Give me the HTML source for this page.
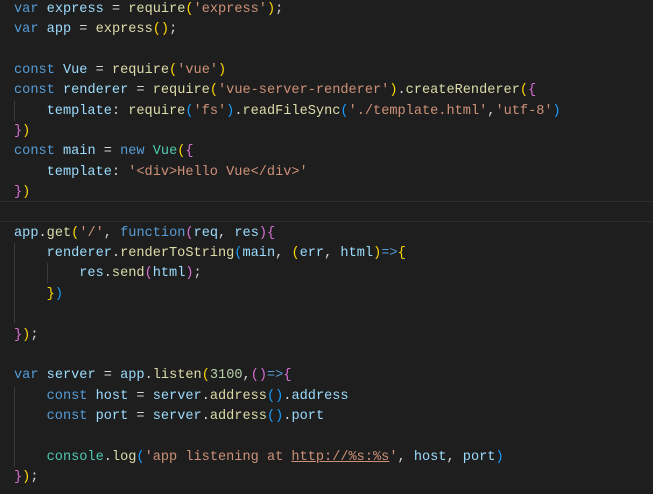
<!DOCTYPE html>
<html><head><meta charset="utf-8"><style>
html,body{margin:0;padding:0;background:#1e1e1e;width:653px;height:494px;overflow:hidden}
pre{position:absolute;left:14px;top:0px;margin:0;font-family:"Liberation Mono",monospace;font-size:13.6px;line-height:20.35px;color:#d4d4d4}
.k{color:#569cd6}.v{color:#9cdcfe}.f{color:#dcdcaa}.s{color:#ce9178}.c{color:#4ec9b0}.n{color:#b5cea8}
.y{color:#ffd700}.p{color:#da70d6}.b{color:#179fff}.u{text-decoration:underline}
.hl{position:absolute;left:0;top:201px;width:653px;height:19px;border-top:1px solid #2c2c2c;border-bottom:1px solid #2c2c2c}
.g{position:absolute;width:1px;background:#3a3a3a}
</style></head><body>
<div class="hl"></div>
<div class="g" style="left:14px;top:101px;height:20px"></div>
<div class="g" style="left:14px;top:243px;height:80px"></div>
<div class="g" style="left:47px;top:263px;height:20px"></div>
<div class="g" style="left:14px;top:387px;height:80px"></div>
<pre><span class="k">var</span> <span class="v">express</span> = <span class="f">require</span><span class="y">(</span><span class="s">'express'</span><span class="y">)</span>;
<span class="k">var</span> <span class="v">app</span> = <span class="f">express</span><span class="y">()</span>;

<span class="k">const</span> <span class="v">Vue</span> = <span class="f">require</span><span class="y">(</span><span class="s">'vue'</span><span class="y">)</span>
<span class="k">const</span> <span class="v">renderer</span> = <span class="f">require</span><span class="y">(</span><span class="s">'vue-server-renderer'</span><span class="y">)</span>.<span class="f">createRenderer</span><span class="y">(</span><span class="p">{</span>
    <span class="v">template</span>: <span class="f">require</span><span class="b">(</span><span class="s">'fs'</span><span class="b">)</span>.<span class="f">readFileSync</span><span class="b">(</span><span class="s">'./template.html'</span>,<span class="s">'utf-8'</span><span class="b">)</span>
<span class="p">}</span><span class="y">)</span>
<span class="k">const</span> <span class="v">main</span> = <span class="k">new</span> <span class="c">Vue</span><span class="y">(</span><span class="p">{</span>
    <span class="v">template</span>: <span class="s">'&lt;div&gt;Hello Vue&lt;/div&gt;'</span>
<span class="p">}</span><span class="y">)</span>

<span class="v">app</span>.<span class="f">get</span><span class="y">(</span><span class="s">'/'</span>, <span class="k">function</span><span class="p">(</span><span class="v">req</span>, <span class="v">res</span><span class="p">){</span>
    <span class="v">renderer</span>.<span class="f">renderToString</span><span class="b">(</span><span class="v">main</span>, <span class="y">(</span><span class="v">err</span>, <span class="v">html</span><span class="y">)</span><span class="k">=&gt;</span><span class="y">{</span>
        <span class="v">res</span>.<span class="f">send</span><span class="p">(</span><span class="v">html</span><span class="p">)</span>;
    <span class="y">}</span><span class="b">)</span>

<span class="p">}</span><span class="y">)</span>;

<span class="k">var</span> <span class="v">server</span> = <span class="v">app</span>.<span class="f">listen</span><span class="y">(</span><span class="n">3100</span>,<span class="p">()</span><span class="k">=&gt;</span><span class="p">{</span>
    <span class="k">const</span> <span class="v">host</span> = <span class="v">server</span>.<span class="f">address</span><span class="b">()</span>.<span class="v">address</span>
    <span class="k">const</span> <span class="v">port</span> = <span class="v">server</span>.<span class="f">address</span><span class="b">()</span>.<span class="v">port</span>

    <span class="c">console</span>.<span class="f">log</span><span class="b">(</span><span class="s">'app listening at <span class="u">http://%s:%s</span>'</span>, <span class="v">host</span>, <span class="v">port</span><span class="b">)</span>
<span class="p">}</span><span class="y">)</span>;</pre>
</body></html>
